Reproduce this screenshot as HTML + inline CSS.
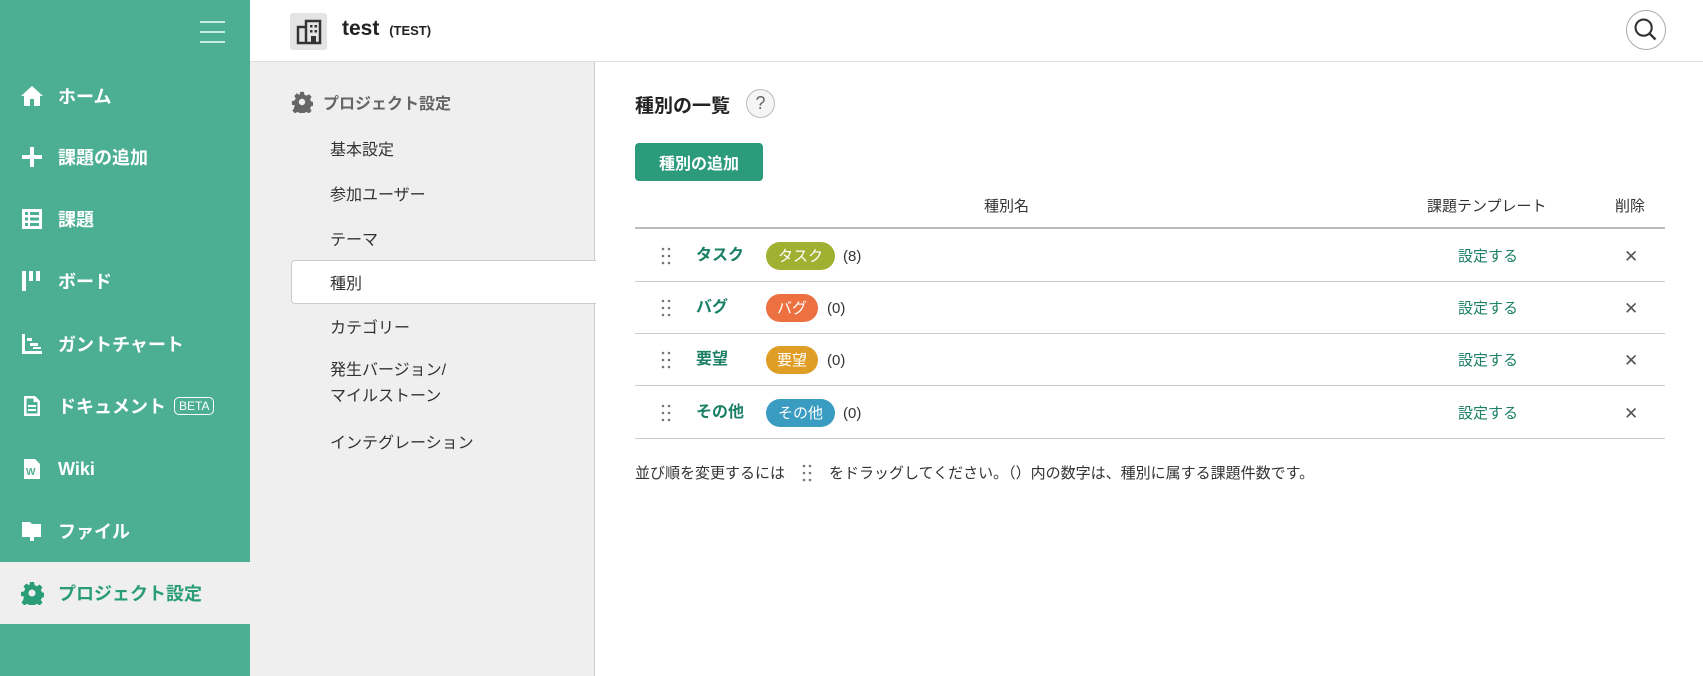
<!DOCTYPE html>
<html><head><meta charset="utf-8"><style>
*{margin:0;padding:0;box-sizing:border-box}
body{width:1703px;height:676px;overflow:hidden;background:#fff;font-family:"Liberation Sans","Noto Sans CJK JP",sans-serif;color:#333;position:relative}
.sb{position:absolute;left:0;top:0;width:250px;height:676px;background:#4caf93}
.ham{position:absolute;left:200px;top:21px;width:25px;height:22px;border-top:2px solid #c8ebe0;border-bottom:2px solid #c8ebe0}
.ham:after{content:"";position:absolute;left:0;top:8px;width:25px;height:2px;background:#c8ebe0}
.mi{position:absolute;left:0;width:250px;height:62px;color:#fff;font-weight:bold;font-size:18px;display:flex;align-items:center;padding-left:20px}
.mi svg{width:24px;height:24px;margin-right:14px;flex:none}
.mi.sel{background:#efefef;color:#2a9d78}
.beta{font-size:12px;font-weight:normal;border:1px solid #fff;border-radius:5px;padding:0 4px;margin-left:8px;line-height:16px}
.hdr{position:absolute;left:250px;top:0;right:0;height:62px;border-bottom:1px solid #ddd;background:#fff}
.bld{position:absolute;left:40px;top:13px;width:37px;height:37px;background:#e4e4e4;border-radius:3px}
.sub{position:absolute;left:250px;top:62px;width:345px;height:614px;background:#efefef;border-right:1px solid #ccc}
.sh{position:absolute;left:41px;top:28px;display:flex;align-items:center;color:#666;font-weight:bold;font-size:16px}
.si{position:absolute;left:80px;font-size:16px;color:#333}
.selbox{position:absolute;left:41px;top:198px;width:305px;height:44px;background:#fff;border:1px solid #ccc;border-right:none;border-radius:4px 0 0 4px}
.btn{position:absolute;left:635px;top:143px;width:128px;height:38px;background:#2b9b7b;color:#fff;font-weight:bold;font-size:16px;border-radius:4px;display:flex;align-items:center;justify-content:center}
.th{position:absolute;top:195px;font-size:15px;color:#333}
.line{position:absolute;left:635px;width:1030px;height:1px;background:#ccc}
.row{position:absolute;left:635px;width:1030px;height:40px;display:flex;align-items:center;line-height:1}
.dots{position:absolute;left:26px;top:11px;width:10px;height:18px}
.nm{position:absolute;left:61px;font-weight:bold;font-size:16px;color:#1b8066}
.bd{position:absolute;left:131px;top:6px;height:28px;border-radius:14px;color:#fff;font-size:15px;display:flex;align-items:center;justify-content:center}
.ct{position:absolute;font-size:15px}
.set{position:absolute;left:823px;font-size:15px;color:#1b8066}
.x{position:absolute;left:989px;font-size:17px;color:#555}
</style></head><body>
<div class="sb">
<div class="ham"></div>
<div class="mi" style="top:65px"><svg viewBox="0 0 24 24"><path d="M12 2L1 12h3v10h6v-7h4v7h6V12h3z" fill="#fff"/></svg>ホーム</div>
<div class="mi" style="top:126px"><svg viewBox="0 0 24 24"><path d="M10 2h4v8h8v4h-8v8h-4v-8H2v-4h8z" fill="#fff"/></svg>課題の追加</div>
<div class="mi" style="top:188px"><svg viewBox="0 0 24 24"><path d="M2 2h20v20H2zM5 5v3h3V5zm5 0v3h9V5zM5 10.5v3h3v-3zm5 0v3h9v-3zM5 16v3h3v-3zm5 0v3h9v-3z" fill="#fff" fill-rule="evenodd"/></svg>課題</div>
<div class="mi" style="top:250px"><svg viewBox="0 0 24 24"><path d="M2 2h4v20H2zM9 2h4v10H9zM16 2h4v10h-4z" fill="#fff"/></svg>ボード</div>
<div class="mi" style="top:313px"><svg viewBox="0 0 24 24"><path d="M2 2h3v17h17v3H2zM7 6h5v3H7zM10 11h8v3h-8zM13 15h8v2h-8z" fill="#fff"/></svg>ガントチャート</div>
<div class="mi" style="top:375px"><svg viewBox="0 0 24 24"><path d="M4 2h11l5 5v15H4zM6.5 4.5v15h11V8h-4V4.5zM8 11h8v2H8zM8 15h8v2H8z" fill="#fff" fill-rule="evenodd"/></svg>ドキュメント<span class="beta">BETA</span></div>
<div class="mi" style="top:438px"><svg viewBox="0 0 24 24"><path d="M4 2h11l5 5v15H4z" fill="#fff"/><text x="6" y="18" font-size="10" font-weight="bold" fill="#4caf93" font-family="Liberation Sans">W</text></svg>Wiki</div>
<div class="mi" style="top:500px"><svg viewBox="0 0 24 24"><path d="M2 3h8l2 2h9v13H2zM10 18h4v4h-4z" fill="#fff"/></svg>ファイル</div>
<div class="mi sel" style="top:562px"><svg viewBox="0 0 24 24"><path d="M10 1h4l.6 3 2.4 1.2 2.6-1.7 2.9 2.9-1.7 2.6 1.2 2.4 3 .6v4l-3 .6-1.2 2.4 1.7 2.6-2.9 2.9-2.6-1.7-2.4 1.2-.6 3h-4l-.6-3-2.4-1.2-2.6 1.7-2.9-2.9 1.7-2.6L4 15.6 1 15v-4l3-.6L5.2 8 3.5 5.4l2.9-2.9L9 4.2 9.4 4zM12 8.5a3.5 3.5 0 100 7 3.5 3.5 0 000-7z" fill="#2a9d78" fill-rule="evenodd"/></svg>プロジェクト設定</div>
</div>
<div class="hdr">
<div class="bld"><svg viewBox="0 0 37 37" width="37" height="37"><path d="M8 14h8v16H8zM16 8h14v22H16z" fill="none" stroke="#333" stroke-width="2.5"/><path d="M20 12h2.5v2.5H20zM24.5 12H27v2.5h-2.5zM20 17h2.5v2.5H20zM24.5 17H27v2.5h-2.5zM21 23h5v7h-5z" fill="#333"/></svg></div>
<div style="position:absolute;left:92px;top:17px;font-size:21px;font-weight:bold;color:#222">test <span style="font-size:13px;margin-left:4px">(TEST)</span></div>
<div style="position:absolute;left:1376px;top:10px;width:40px;height:40px;border:1px solid #aaa;border-radius:50%"><svg viewBox="0 0 40 40" width="38" height="38"><circle cx="17.5" cy="17.5" r="8.5" fill="none" stroke="#333" stroke-width="2.2"/><path d="M23.5 23.5l6.5 6.5" stroke="#333" stroke-width="2.5"/></svg></div>
</div>
<div class="sub">
<div class="sh"><svg viewBox="0 0 24 24" width="22" height="22" style="margin-right:10px"><path d="M10 1h4l.6 3 2.4 1.2 2.6-1.7 2.9 2.9-1.7 2.6 1.2 2.4 3 .6v4l-3 .6-1.2 2.4 1.7 2.6-2.9 2.9-2.6-1.7-2.4 1.2-.6 3h-4l-.6-3-2.4-1.2-2.6 1.7-2.9-2.9 1.7-2.6L4 15.6 1 15v-4l3-.6L5.2 8 3.5 5.4l2.9-2.9L9 4.2 9.4 4zM12 8.5a3.5 3.5 0 100 7 3.5 3.5 0 000-7z" fill="#666" fill-rule="evenodd"/></svg>プロジェクト設定</div>
<div class="selbox"></div>
<div class="si" style="top:74px">基本設定</div>
<div class="si" style="top:119px">参加ユーザー</div>
<div class="si" style="top:164px">テーマ</div>
<div class="si" style="top:208px">種別</div>
<div class="si" style="top:252px">カテゴリー</div>
<div class="si" style="top:296px;line-height:26px">発生バージョン/<br>マイルストーン</div>
<div class="si" style="top:367px">インテグレーション</div>
</div>
<div style="position:absolute;left:635px;top:91px;font-size:19px;font-weight:bold;color:#222">種別の一覧</div>
<div style="position:absolute;left:746px;top:89px;width:29px;height:29px;border:1px solid #bbb;border-radius:50%;background:#f5f5f5;text-align:center;line-height:27px;font-size:18px;color:#666">?</div>
<div class="btn">種別の追加</div>
<div class="th" style="left:984px">種別名</div>
<div class="th" style="left:1427px">課題テンプレート</div>
<div class="th" style="left:1615px">削除</div>
<div class="line" style="top:227px;height:2px;background:#bbb"></div>
<div class="line" style="top:281px"></div>
<div class="line" style="top:333px"></div>
<div class="line" style="top:385px"></div>
<div class="line" style="top:438px"></div>

<div class="row" style="top:236px">
<svg class="dots" viewBox="0 0 10 18"><g fill="#777"><circle cx="2" cy="2" r="1.3"/><circle cx="8" cy="2" r="1.3"/><circle cx="2" cy="9" r="1.3"/><circle cx="8" cy="9" r="1.3"/><circle cx="2" cy="16" r="1.3"/><circle cx="8" cy="16" r="1.3"/></g></svg>
<div class="nm">タスク</div>
<div class="bd" style="width:69px;background:#a0b030">タスク</div>
<div class="ct" style="left:208px">(8)</div>
<div class="set">設定する</div><div class="x">✕</div></div>

<div class="row" style="top:288px">
<svg class="dots" viewBox="0 0 10 18"><g fill="#777"><circle cx="2" cy="2" r="1.3"/><circle cx="8" cy="2" r="1.3"/><circle cx="2" cy="9" r="1.3"/><circle cx="8" cy="9" r="1.3"/><circle cx="2" cy="16" r="1.3"/><circle cx="8" cy="16" r="1.3"/></g></svg>
<div class="nm">バグ</div>
<div class="bd" style="width:52px;background:#ec7040">バグ</div>
<div class="ct" style="left:192px">(0)</div>
<div class="set">設定する</div><div class="x">✕</div></div>

<div class="row" style="top:340px">
<svg class="dots" viewBox="0 0 10 18"><g fill="#777"><circle cx="2" cy="2" r="1.3"/><circle cx="8" cy="2" r="1.3"/><circle cx="2" cy="9" r="1.3"/><circle cx="8" cy="9" r="1.3"/><circle cx="2" cy="16" r="1.3"/><circle cx="8" cy="16" r="1.3"/></g></svg>
<div class="nm">要望</div>
<div class="bd" style="width:52px;background:#e09d26">要望</div>
<div class="ct" style="left:192px">(0)</div>
<div class="set">設定する</div><div class="x">✕</div></div>

<div class="row" style="top:393px">
<svg class="dots" viewBox="0 0 10 18"><g fill="#777"><circle cx="2" cy="2" r="1.3"/><circle cx="8" cy="2" r="1.3"/><circle cx="2" cy="9" r="1.3"/><circle cx="8" cy="9" r="1.3"/><circle cx="2" cy="16" r="1.3"/><circle cx="8" cy="16" r="1.3"/></g></svg>
<div class="nm">その他</div>
<div class="bd" style="width:69px;background:#3a9cc0">その他</div>
<div class="ct" style="left:208px">(0)</div>
<div class="set">設定する</div><div class="x">✕</div></div>

<div style="position:absolute;left:635px;top:462px;font-size:15px;color:#333;display:flex;align-items:center">並び順を変更するには<svg width="10" height="18" viewBox="0 0 10 18" style="margin:0 17px 0 17px"><g fill="#777"><circle cx="2" cy="2" r="1.3"/><circle cx="8" cy="2" r="1.3"/><circle cx="2" cy="9" r="1.3"/><circle cx="8" cy="9" r="1.3"/><circle cx="2" cy="16" r="1.3"/><circle cx="8" cy="16" r="1.3"/></g></svg>をドラッグしてください。（）内の数字は、種別に属する課題件数です。</div>
</body></html>
